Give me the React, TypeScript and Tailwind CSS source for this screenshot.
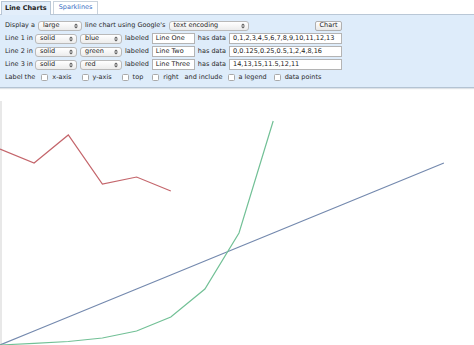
import React from 'react';

const font = { fontFamily: '"DejaVu Sans", Verdana, sans-serif' };

function Select({ value, w }: { value: string; w: string }) {
  return (
    <div
      className={`${w} h-[10px] shrink-0 flex items-center justify-between pl-[4px] pr-[3px] rounded-[3px] border border-[#b9b9b9] bg-gradient-to-b from-white to-[#ececec] text-[#222] leading-none`}
    >
      <span>{value}</span>
      <svg width="4" height="6" viewBox="0 0 4 6">
        <path d="M0 2.4 L2 0.4 L4 2.4 Z M0 3.6 L2 5.6 L4 3.6 Z" fill="#555" />
      </svg>
    </div>
  );
}

function Input({ value, w }: { value: string; w: string }) {
  return (
    <div className={`${w} h-[11px] shrink-0 flex items-center pl-[3px] border border-[#b4b4b4] bg-white text-[#222] leading-none whitespace-nowrap`}>
      {value}
    </div>
  );
}

function Check() {
  return <span className="w-[7px] h-[7px] rounded-[1.5px] border border-[#a9a9a9] bg-white shrink-0" />;
}

const lines = [
  { n: 1, style: 'solid', color: 'blue', label: 'Line One', data: '0,1,2,3,4,5,6,7,8,9,10,11,12,13' },
  { n: 2, style: 'solid', color: 'green', label: 'Line Two', data: '0,0.125,0.25,0.5,1,2,4,8,16' },
  { n: 3, style: 'solid', color: 'red', label: 'Line Three', data: '14,13,15,11.5,12,11' },
];

function pts(values: number[]) {
  return values.map((v, i) => `${(i * 34.15).toFixed(1)},${(257 - v * 14).toFixed(1)}`).join(' ');
}

export default function App() {
  return (
    <div className="w-[474px] h-[345px] bg-white overflow-hidden text-[6.5px] text-[#2a2a2a] whitespace-nowrap" style={font}>
      {/* tabs */}
      <div className="flex items-end h-[14px] pl-[1px] gap-[2px] relative z-10">
        <div className="h-[14px] -mb-px px-[3px] flex items-center border border-b-0 border-[#b9c7d6] bg-[#e3eefa] font-bold text-[#222]">
          Line Charts
        </div>
        <div className="h-[13px] px-[5px] flex items-center border border-b-0 border-[#c9d2dc] bg-white text-[#3a6fc4]">
          Sparklines
        </div>
      </div>

      {/* form panel */}
      <div className="border-t border-[#b9c7d6] border-b border-b-[#b3c3d3] bg-[#deecfa] pl-[5px] pt-[4px] pb-[3px] shadow-[0_1px_1px_rgba(120,140,160,0.25)]">
        <div className="w-[337px] flex flex-col">
          <div className="h-[13px] flex items-center gap-[3px]">
            <span>Display a</span>
            <Select value="large" w="w-[44px]" />
            <span>line chart using Google's</span>
            <Select value="text encoding" w="w-[80px]" />
            <div className="ml-auto w-[27px] h-[10px] flex items-center justify-center rounded-[2px] border border-[#b0b0b0] bg-gradient-to-b from-white to-[#e8e8e8] text-[#222] leading-none">
              Chart
            </div>
          </div>
          {lines.map((l) => (
            <div key={l.n} className="h-[13px] flex items-center gap-[3px]">
              <span className="w-[27px] shrink-0">Line {l.n} in</span>
              <Select value={l.style} w="w-[42px]" />
              <Select value={l.color} w="w-[42px]" />
              <span>labeled</span>
              <Input value={l.label} w="w-[43px]" />
              <span>has data</span>
              <div className="flex-1 min-w-0">
                <Input value={l.data} w="w-full" />
              </div>
            </div>
          ))}
          <div className="h-[13px] flex items-center">
            <span>Label the</span>
            <span className="ml-[6px] flex items-center gap-[4px]"><Check />x-axis</span>
            <span className="ml-[10px] flex items-center gap-[4px]"><Check />y-axis</span>
            <span className="ml-[10px] flex items-center gap-[4px]"><Check />top</span>
            <span className="ml-[9px] flex items-center gap-[4px]"><Check />right</span>
            <span className="ml-[6px]">and include</span>
            <span className="ml-[6px] flex items-center gap-[3px]"><Check />a legend</span>
            <span className="ml-[7px] flex items-center gap-[4px]"><Check />data points</span>
          </div>
        </div>
      </div>

      {/* chart */}
      <svg width="474" height="258" className="block">
        <rect x="0" y="13" width="2" height="245" fill="#e8e8e8" />
        <polyline
          points={pts([0, 1, 2, 3, 4, 5, 6, 7, 8, 9, 10, 11, 12, 13])}
          fill="none"
          stroke="#7489ae"
          strokeWidth="1.2"
        />
        <polyline
          points={pts([0, 0.125, 0.25, 0.5, 1, 2, 4, 8, 16])}
          fill="none"
          stroke="#72c096"
          strokeWidth="1.2"
        />
        <polyline
          points={pts([14, 13, 15, 11.5, 12, 11])}
          fill="none"
          stroke="#c4656b"
          strokeWidth="1.2"
        />
      </svg>
    </div>
  );
}
